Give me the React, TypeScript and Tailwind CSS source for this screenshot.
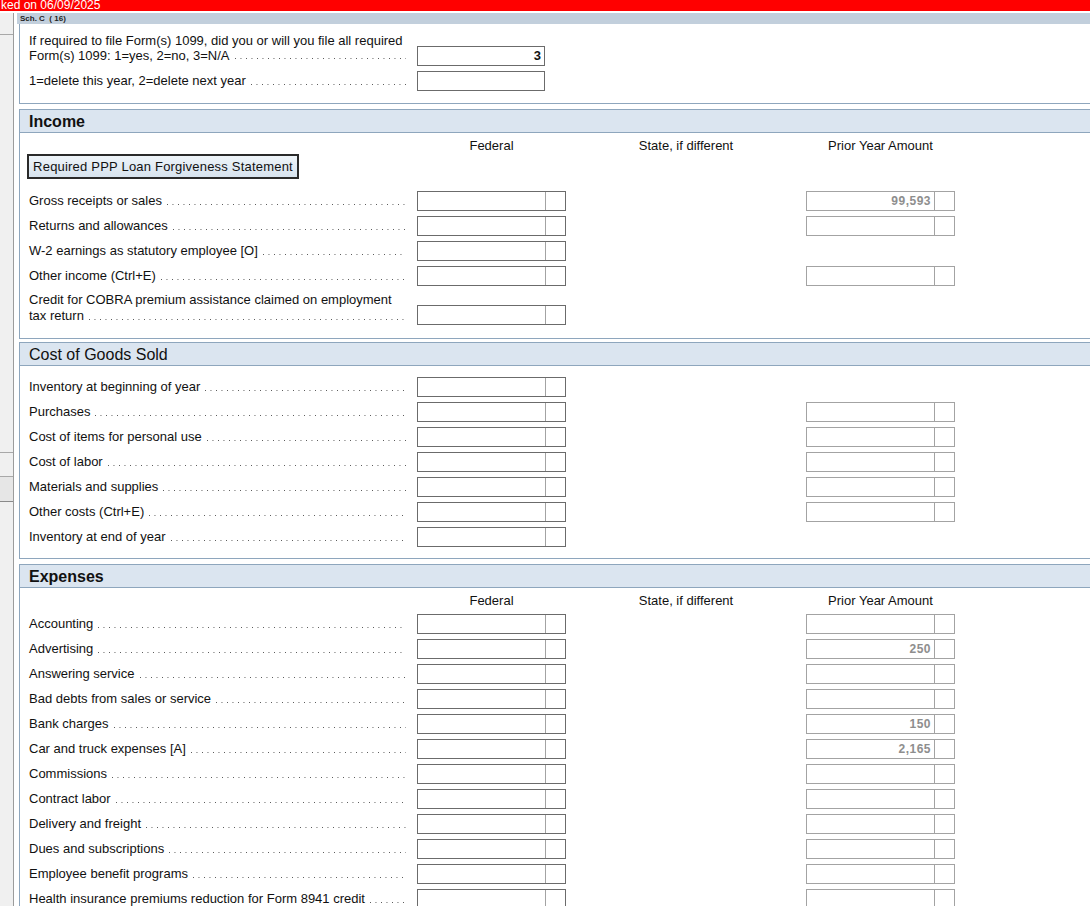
import React from 'react';

type Line = {
  label: string;
  federal?: boolean;
  prior?: boolean;
  priorValue?: string;
};

const incomeRows: Line[] = [
  { label: 'Gross receipts or sales', federal: true, prior: true, priorValue: '99,593' },
  { label: 'Returns and allowances', federal: true, prior: true },
  { label: 'W-2 earnings as statutory employee [O]', federal: true },
  { label: 'Other income (Ctrl+E)', federal: true, prior: true },
];

const cogsRows: Line[] = [
  { label: 'Inventory at beginning of year', federal: true },
  { label: 'Purchases', federal: true, prior: true },
  { label: 'Cost of items for personal use', federal: true, prior: true },
  { label: 'Cost of labor', federal: true, prior: true },
  { label: 'Materials and supplies', federal: true, prior: true },
  { label: 'Other costs (Ctrl+E)', federal: true, prior: true },
  { label: 'Inventory at end of year', federal: true },
];

const expenseRows: Line[] = [
  { label: 'Accounting', federal: true, prior: true },
  { label: 'Advertising', federal: true, prior: true, priorValue: '250' },
  { label: 'Answering service', federal: true, prior: true },
  { label: 'Bad debts from sales or service', federal: true, prior: true },
  { label: 'Bank charges', federal: true, prior: true, priorValue: '150' },
  { label: 'Car and truck expenses [A]', federal: true, prior: true, priorValue: '2,165' },
  { label: 'Commissions', federal: true, prior: true },
  { label: 'Contract labor', federal: true, prior: true },
  { label: 'Delivery and freight', federal: true, prior: true },
  { label: 'Dues and subscriptions', federal: true, prior: true },
  { label: 'Employee benefit programs', federal: true, prior: true },
  { label: 'Health insurance premiums reduction for Form 8941 credit', federal: true, prior: true },
];

// dotted leader drawn as a 1px strip of repeating dots
const Leader = () => (
  <div className="mb-[4px] ml-[5px] mr-[2px] h-[1px] flex-1 bg-[linear-gradient(to_right,#555_1px,transparent_1px)] bg-[length:5.5px_1px] bg-repeat-x" />
);

const Label = ({ text }: { text: string }) => (
  <div className="flex w-[379px] items-end whitespace-nowrap leading-[16px]">
    <span>{text}</span>
    <Leader />
  </div>
);

// amount box with the small adjustment cell on the right
const AmountBox = ({ value, prior }: { value?: string; prior?: boolean }) => (
  <div
    className={`flex h-[20px] w-[149px] border bg-white ${prior ? 'border-[#a3a3a3]' : 'border-[#6b6b6b]'}`}
  >
    <div className="flex flex-1 items-center justify-end pr-[3px] text-[12px] font-bold tracking-[0.5px] text-[#8e8e8e]">
      {value}
    </div>
    <div className="w-[20px] border-l border-[#a3a3a3]" />
  </div>
);

const Row = ({ row }: { row: Line }) => (
  <div className="flex h-[25px] items-center">
    <Label text={row.label} />
    <div className="ml-[9px] w-[149px]">{row.federal && <AmountBox />}</div>
    <div className="w-[240px]" />
    <div className="w-[149px]">{row.prior && <AmountBox prior value={row.priorValue} />}</div>
  </div>
);

const ColumnHeads = () => (
  <div className="flex h-[14px] items-center leading-[14px]">
    <div className="w-[388px]" />
    <div className="w-[149px] text-center">Federal</div>
    <div className="w-[240px] text-center">State, if different</div>
    <div className="w-[149px] text-center">Prior Year Amount</div>
  </div>
);

const SectionHead = ({ title, bold }: { title: string; bold?: boolean }) => (
  <div
    className={`h-[23px] border-b border-[#8ea6bd] bg-[#dbe5f0] pl-[9px] text-[16px] leading-[23px] text-[#111] ${bold ? 'font-semibold' : ''}`}
  >
    {title}
  </div>
);

export default function App() {
  return (
    <div className="h-[906px] w-[1090px] overflow-hidden bg-white font-['Liberation_Sans',Arial,sans-serif] text-[13px] text-[#111]">
      {/* status strip */}
      <div className="h-[11px] overflow-hidden whitespace-nowrap bg-[#ff0000] pl-[1px] text-[12px] leading-[11px] text-white">
        ked on 06/09/2025
      </div>

      <div className="mt-[2px] flex">
        {/* navigator stub on the left */}
        <div className="flex h-[893px] w-[14px] flex-col border-r border-[#9c9c9c] bg-[#f0f0f0]">
          <div className="h-[22px] border-b border-[#a8a8a8]" />
          <div className="mt-[417px] h-[25px] border-y border-[#a8a8a8]" />
          <div className="h-[25px] border-b border-[#8a8a8a] bg-[#e6e6e6]" />
        </div>
        <div className="w-[3px]" />

        <div className="flex-1">
          <div className="h-[11px] bg-[#c2cfdc] pl-[3px] text-[8px] font-bold leading-[11px] text-[#222]">
            Sch. C&nbsp;&nbsp;( 16)
          </div>

          {/* 1099 questions */}
          <div className="ml-[2px] border-b border-l border-[#8ea6bd] pb-[10px] pl-[9px] pt-[9px]">
            <div className="flex items-end">
              <div className="w-[379px] pb-[3px] leading-[15px]">
                <div className="whitespace-nowrap">If required to file Form(s) 1099, did you or will you file all required</div>
                <div className="flex items-end whitespace-nowrap">
                  <span>Form(s) 1099: 1=yes, 2=no, 3=N/A</span>
                  <Leader />
                </div>
              </div>
              <div className="ml-[9px] flex h-[20px] w-[128px] items-center justify-end border border-[#6b6b6b] pr-[3px] text-[13px] font-bold">
                3
              </div>
            </div>
            <div className="mt-[2px] flex h-[25px] items-center">
              <Label text="1=delete this year, 2=delete next year" />
              <div className="ml-[9px] h-[20px] w-[128px] border border-[#6b6b6b]" />
            </div>
          </div>

          {/* Income */}
          <div className="ml-[2px] mt-[5px] border-y border-l border-[#8ea6bd] pb-[13px]">
            <SectionHead title="Income" bold />
            <div className="pl-[9px]">
              <div className="mt-[6px]">
                <ColumnHeads />
              </div>
              <button className="-ml-[2px] mt-[1px] h-[25px] w-[272px] border-2 border-[#2a2a2a] bg-gradient-to-b from-[#eef4f9] to-[#d7e3ee] text-[13px] leading-[20px] tracking-[0.2px]">
                Required PPP Loan Forgiveness Statement
              </button>
              <div className="mt-[9px]">
                {incomeRows.map((r) => (
                  <Row key={r.label} row={r} />
                ))}
                <div className="flex items-end pt-[4px]">
                  <div className="w-[379px] pb-[1px] leading-[16px]">
                    <div className="whitespace-nowrap">Credit for COBRA premium assistance claimed on employment</div>
                    <div className="flex items-end whitespace-nowrap">
                      <span>tax return</span>
                      <Leader />
                    </div>
                  </div>
                  <div className="ml-[9px]">
                    <AmountBox />
                  </div>
                </div>
              </div>
            </div>
          </div>

          {/* Cost of Goods Sold */}
          <div className="ml-[2px] mt-[3px] border-y border-l border-[#8ea6bd] pb-[9px]">
            <SectionHead title="Cost of Goods Sold" />
            <div className="mt-[8px] pl-[9px]">
              {cogsRows.map((r) => (
                <Row key={r.label} row={r} />
              ))}
            </div>
          </div>

          {/* Expenses */}
          <div className="ml-[2px] mt-[5px] border-t border-l border-[#8ea6bd]">
            <SectionHead title="Expenses" bold />
            <div className="pl-[9px]">
              <div className="mt-[6px]">
                <ColumnHeads />
              </div>
              <div className="mt-[3px]">
                {expenseRows.map((r) => (
                  <Row key={r.label} row={r} />
                ))}
              </div>
            </div>
          </div>
        </div>
      </div>
    </div>
  );
}
